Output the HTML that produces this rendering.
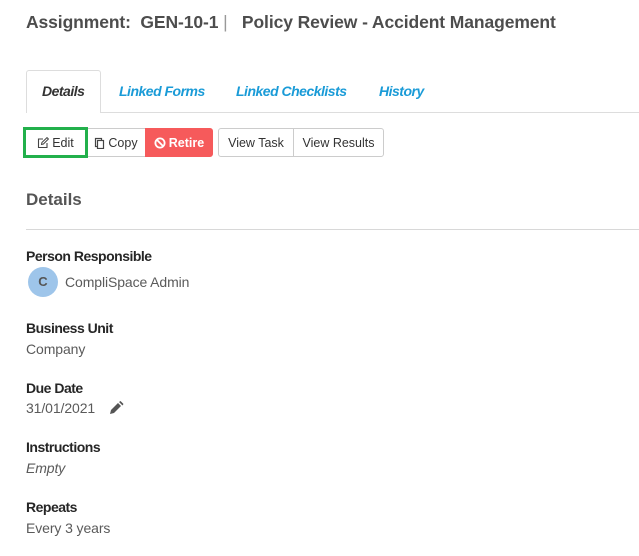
<!DOCTYPE html>
<html><head><meta charset="utf-8"><style>
*{margin:0;padding:0;box-sizing:border-box}
body{width:639px;height:556px;background:#fff;font-family:"Liberation Sans",sans-serif;position:relative;overflow:hidden;color:#555}
.a{position:absolute;white-space:nowrap}
.t{font-size:17.5px;font-weight:bold;color:#4d4d4d;letter-spacing:-0.1px}
.tab{font-size:14px;font-weight:bold;font-style:italic;color:#1a9bd7;letter-spacing:-0.5px}
.btn{position:absolute;top:128px;height:29px;border:1px solid #ccc;font-size:12.5px;color:#333;display:flex;align-items:center;justify-content:center;background:#fff}
.lbl{font-size:14px;font-weight:bold;color:#262626;letter-spacing:-0.5px}
.val{font-size:14px;color:#5a5a5a;letter-spacing:-0.1px}
</style></head><body>
<div class="a t" style="left:26px;top:12px">Assignment:&nbsp; GEN-10-1 <span style="font-weight:normal;color:#999">|</span>&nbsp;&nbsp; Policy Review - Accident Management</div>

<div class="a" style="left:26px;top:70px;width:75px;height:43px;border:1px solid #ddd;border-bottom:none;border-radius:3px 3px 0 0;background:#fff;z-index:2"></div>
<div class="a" style="left:26px;top:112px;width:613px;height:1px;background:#ddd"></div>
<div class="a tab" style="left:42px;top:83px;color:#333;z-index:3">Details</div>
<div class="a tab" style="left:119px;top:83px">Linked Forms</div>
<div class="a tab" style="left:236px;top:83px">Linked Checklists</div>
<div class="a tab" style="left:379px;top:83px">History</div>

<div class="btn" style="left:86px;width:60px;">
<svg width="11" height="12" viewBox="0 0 11 12" style="margin-right:3px"><rect x="1.5" y="1.5" width="6" height="8" fill="none" stroke="#444" stroke-width="1.2"/><rect x="3.5" y="3.5" width="6" height="8" fill="#fff" stroke="#444" stroke-width="1.2"/></svg>Copy</div>
<div class="btn" style="left:145px;width:68px;background:#f65a5b;border-color:#f65a5b;color:#fff;font-weight:bold;border-radius:0 3px 3px 0">
<svg width="12" height="12" viewBox="0 0 12 12" style="margin-right:3px"><circle cx="6" cy="6" r="4.6" fill="none" stroke="#fff" stroke-width="1.8"/><line x1="2.8" y1="2.8" x2="9.2" y2="9.2" stroke="#fff" stroke-width="1.8"/></svg>Retire</div>
<div class="btn" style="left:23px;top:127px;height:31px;width:65px;border:3px solid #22b04b">
<svg width="12" height="12" viewBox="0 0 12 12" style="margin-right:3px"><path d="M6 2H1.5v8.5H10V6" fill="none" stroke="#444" stroke-width="1.1"/><path d="M4.5 7.5l.4-2L10 .6l1.4 1.4-5 5z" fill="none" stroke="#444" stroke-width="1"/></svg>Edit</div>
<div class="btn" style="left:218px;width:76px;border-radius:3px 0 0 3px">View Task</div>
<div class="btn" style="left:293px;width:91px;border-radius:0 3px 3px 0">View Results</div>

<div class="a" style="left:26px;top:190px;font-size:17px;font-weight:bold;color:#555">Details</div>
<div class="a" style="left:26px;top:229px;width:613px;height:1px;background:#d8d8d8"></div>

<div class="a lbl" style="left:26px;top:248px">Person Responsible</div>
<div class="a" style="left:28px;top:267px;width:30px;height:30px;border-radius:50%;background:#9ec5ea;color:#555;font-weight:bold;font-size:13px;text-align:center;line-height:30px">C</div>
<div class="a val" style="left:65px;top:274px">CompliSpace Admin</div>

<div class="a lbl" style="left:26px;top:320px">Business Unit</div>
<div class="a val" style="left:26px;top:341px">Company</div>

<div class="a lbl" style="left:26px;top:380px">Due Date</div>
<div class="a val" style="left:26px;top:400px">31/01/2021</div>
<svg class="a" style="left:109px;top:401px" width="15" height="14" viewBox="0 0 15 14"><path d="M1 13l1-4 7-7 3 3-7 7z" fill="#555"/><path d="M10 1l1.5-1 3 3-1 1.5z" fill="#555"/></svg>

<div class="a lbl" style="left:26px;top:439px">Instructions</div>
<div class="a val" style="left:26px;top:460px;font-style:italic">Empty</div>

<div class="a lbl" style="left:26px;top:499px">Repeats</div>
<div class="a val" style="left:26px;top:520px">Every 3 years</div>
</body></html>
